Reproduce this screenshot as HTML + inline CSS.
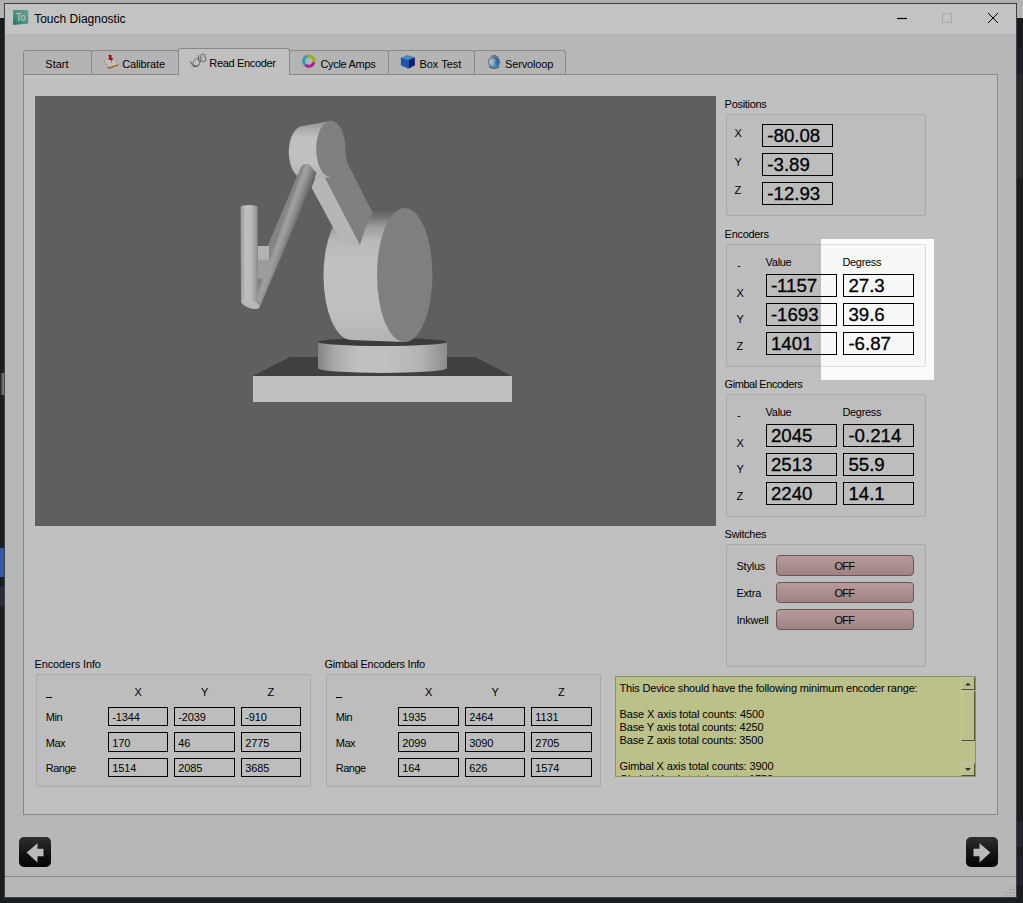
<!DOCTYPE html><html><head><meta charset="utf-8"><title>Touch Diagnostic</title><style>
html,body{margin:0;padding:0}
body{width:1023px;height:903px;overflow:hidden;position:relative;background:#23262c;font-family:"Liberation Sans",sans-serif;font-size:11px;color:#000}
div,span,svg{position:absolute;box-sizing:border-box}
.t{white-space:pre}
.win{left:5px;top:4px;width:1011px;height:893px;background:#f0f0f0}
.gb{border:1px solid #dedede;border-radius:2px;background:#f8f8f8}
.f{border:1px solid #000}
.tab{border:1px solid #b4b4b4;border-bottom:none;background:#ececec;border-radius:3px 3px 0 0}
.btn{border:1px solid #8f6e6e;border-radius:4px;background:linear-gradient(#f1caca,#d0abab)}
.nav{border-radius:5px;background:linear-gradient(#3c3f42,#1c1d1e 50%,#060606)}
</style></head><body>
<div style="left:0px;top:0px;width:1023px;height:18px;background:linear-gradient(#e4e4e4,#f0f0f0)"></div>
<div style="left:0px;top:18px;width:5px;height:885px;background:#21252b"></div>
<div style="left:1016px;top:18px;width:7px;height:885px;background:#22252b"></div>
<div style="left:1016px;top:18px;width:7px;height:30px;background:#1f2329"></div>
<div style="left:1016px;top:48px;width:7px;height:26px;background:#282b33"></div>
<div style="left:1016px;top:74px;width:7px;height:105px;background:#323339"></div>
<div style="left:1016px;top:821px;width:7px;height:26px;background:#2e323e"></div>
<div style="left:1016px;top:856px;width:7px;height:30px;background:#2c2f3a"></div>
<div style="left:0px;top:548px;width:4px;height:29px;background:#4a72dc"></div>
<div style="left:0px;top:587px;width:4px;height:19px;background:#373b43"></div>
<div style="left:0px;top:373px;width:4px;height:22px;background:linear-gradient(90deg,#23262c,#bdbdbd)"></div>
<div style="left:4px;top:3px;width:1013px;height:895px;background:#50545a"></div>
<div class="win">
</div>
<div style="left:5px;top:4px;width:1011px;height:30px;background:#fff"></div>
<svg style="left:12px;top:9px" width="18" height="17" viewBox="12 9 18 17"><defs><linearGradient id="gIc" x1="1" y1="0" x2="0.1" y2="1"><stop offset="0" stop-color="#88d0c4"/><stop offset="0.6" stop-color="#62b8a5"/><stop offset="1" stop-color="#349a84"/></linearGradient></defs><polygon points="13.1,10.1 28.2,10.1 28.2,23.5 13.1,24.9" fill="url(#gIc)"/><text x="16" y="21" font-family="Liberation Sans, sans-serif" font-size="10.5" fill="#f6fdfb" stroke="#f6fdfb" stroke-width="0.25" textLength="9.6" lengthAdjust="spacingAndGlyphs">To</text></svg>
<span class="t" style="left:34.20px;top:11.64px;font-size:12px;line-height:14px;">Touch Diagnostic</span>
<svg style="left:890px;top:8px" width="120" height="22" viewBox="890 8 120 22"><path d="M897 18.5H907" stroke="#000" stroke-width="1.2"/><rect x="942.5" y="13.5" width="9" height="9" fill="none" stroke="#dcdcdc" stroke-width="1"/><path d="M988 13L998 23M998 13L988 23" stroke="#000" stroke-width="1"/></svg>
<div style="left:23px;top:74px;width:975px;height:741px;background:#fbfbfb;border:1px solid #b4b4b4"></div>
<div class="tab" style="left:23px;top:50px;width:69px;height:24px;"></div>
<div class="tab" style="left:91px;top:50px;width:88px;height:24px;"></div>
<div class="tab" style="left:289px;top:50px;width:100px;height:24px;"></div>
<div class="tab" style="left:388px;top:50px;width:87px;height:24px;"></div>
<div class="tab" style="left:474px;top:50px;width:92px;height:24px;"></div>
<div class="tab" style="left:178px;top:48px;width:112px;height:27px;background:#fbfbfb"></div>
<span class="t" style="left:45.30px;top:57.99px;font-size:11px;line-height:13px;">Start</span>
<span class="t" style="left:122.20px;top:57.89px;font-size:11px;line-height:13px;letter-spacing:-0.15px;">Calibrate</span>
<span class="t" style="left:209.30px;top:56.99px;font-size:11px;line-height:13px;letter-spacing:-0.33px;">Read Encoder</span>
<span class="t" style="left:320.40px;top:57.89px;font-size:11px;line-height:13px;letter-spacing:-0.3px;">Cycle Amps</span>
<span class="t" style="left:419.40px;top:57.89px;font-size:11px;line-height:13px;">Box Test</span>
<span class="t" style="left:505.00px;top:57.89px;font-size:11px;line-height:13px;letter-spacing:-0.15px;">Servoloop</span>
<svg style="left:100px;top:52px" width="22" height="20" viewBox="100 52 22 20"><polygon points="104,61 112,59.2 117.8,65 108.7,68.3" fill="#ffffff" fill-opacity="0.8"/><path d="M104 61L108.7 68.3" stroke="#d9955a" stroke-width="1" stroke-dasharray="1.2 0.7" fill="none"/><path d="M108.5 68.3L117.8 65" stroke="#dc8430" stroke-width="1.5" fill="none" stroke-linecap="round"/><path d="M111.5 60V62.6" stroke="#8a8a8a" stroke-width="0.9"/><path d="M108.1 55.2Q109.8 54.3 111.6 55.2L111.4 57.3Q113.3 58 113 59.6Q110.8 60.8 108.6 59.6Q108.3 58 109.2 57.3Z" fill="#d41616"/></svg>
<svg style="left:186px;top:51px" width="24" height="20" viewBox="186 51 24 20"><ellipse cx="196.6" cy="62.4" rx="3.2" ry="4.3" transform="rotate(25 196.6 62.4)" fill="#fff" fill-opacity="0.25" stroke="#8a8a8a" stroke-width="0.75"/><ellipse cx="203" cy="57.9" rx="2.7" ry="3.9" transform="rotate(-10 203 57.9)" fill="#fff" fill-opacity="0.25" stroke="#808080" stroke-width="0.8"/><ellipse cx="203.8" cy="59.5" rx="2.3" ry="2.6" fill="none" stroke="#a8a8a8" stroke-width="0.6"/><path d="M190 61.2Q192 64.5 194.8 66.3" stroke="#5a5a5a" stroke-width="0.9" fill="none"/><path d="M190.3 65.4L194.3 66.7" stroke="#b0b0b0" stroke-width="0.7" fill="none"/><path d="M198.5 55V61Q199.5 62.5 201 61.5" stroke="#6a6a6a" stroke-width="0.8" fill="none"/><path d="M194.4 66.4Q197.5 66.8 199.6 64" stroke="#666" stroke-width="0.8" fill="none"/><circle cx="194.6" cy="66.2" r="0.7" fill="#444"/></svg>
<svg style="left:300px;top:52px" width="18" height="18" viewBox="300 52 18 18"><path d="M307.45 56.08A5.2 5.2 0 0 1 313.89 62.18" stroke="#cfe81a" stroke-width="3.0" fill="none"/><path d="M313.89 62.18A5.2 5.2 0 0 1 305.12 64.78" stroke="#e32bc8" stroke-width="3.0" fill="none"/><path d="M305.12 64.78A5.2 5.2 0 0 1 307.45 56.08" stroke="#2fd6fa" stroke-width="3.0" fill="none"/></svg>
<svg style="left:398px;top:52px" width="20" height="20" viewBox="398 52 20 20"><polygon points="400.9,57.5 407.4,55 414.9,57.2 408.4,60" fill="#55b4ff"/><polygon points="400.9,57.5 408.4,60 408.4,68.8 400.9,65.3" fill="#2a70e4"/><polygon points="408.4,60 414.9,57.2 414.9,65.3 408.4,68.8" fill="#0e2aa6"/></svg>
<svg style="left:485px;top:52px" width="20" height="20" viewBox="485 52 20 20"><defs><linearGradient id="gSv" x1="0" y1="0" x2="0" y2="1"><stop offset="0" stop-color="#2f78e8"/><stop offset="0.5" stop-color="#3a94e8"/><stop offset="1" stop-color="#35d2ff"/></linearGradient><radialGradient id="gSh" cx="0.25" cy="0.45" r="0.55"><stop offset="0" stop-color="#fff" stop-opacity="0.95"/><stop offset="0.45" stop-color="#fff" stop-opacity="0.7"/><stop offset="1" stop-color="#fff" stop-opacity="0"/></radialGradient></defs><path d="M489.2 66.6Q494 70 499 66.6" stroke="#666" stroke-width="1.3" fill="none"/><path d="M491 56.2Q495 53.9 498.8 57.2" stroke="#8a8a8a" stroke-width="1" fill="none"/><circle cx="494.1" cy="62.2" r="5.8" fill="url(#gSv)" stroke="#8e99a6" stroke-width="0.9"/><circle cx="494.1" cy="62.2" r="5.4" fill="url(#gSh)"/><path d="M494.2 62.4H498" stroke="#3a4a5a" stroke-width="0.7"/><path d="M494.2 58V62.4" stroke="#9ab0c8" stroke-width="0.5"/></svg>
<svg style="left:35px;top:96px" width="681" height="430" viewBox="35 96 681 430"><defs>
<linearGradient id="gDisc" gradientUnits="userSpaceOnUse" x1="0" y1="208" x2="0" y2="342"><stop offset="0" stop-color="#737373"/><stop offset="0.06" stop-color="#929292"/><stop offset="0.14" stop-color="#cccccc"/><stop offset="0.24" stop-color="#f1f1f1"/><stop offset="0.4" stop-color="#fbfbfb"/><stop offset="0.75" stop-color="#fbfbfb"/><stop offset="1" stop-color="#ebebeb"/></linearGradient>
<linearGradient id="gBase" gradientUnits="userSpaceOnUse" x1="318" y1="0" x2="447" y2="0"><stop offset="0" stop-color="#adadad"/><stop offset="0.12" stop-color="#dcdcdc"/><stop offset="0.3" stop-color="#fbfbfb"/><stop offset="0.55" stop-color="#fbfbfb"/><stop offset="0.8" stop-color="#ebebeb"/><stop offset="1" stop-color="#b7b7b7"/></linearGradient>
<linearGradient id="gElbow" gradientUnits="userSpaceOnUse" x1="0" y1="121" x2="0" y2="178"><stop offset="0" stop-color="#bcbcbc"/><stop offset="0.12" stop-color="#dcdcdc"/><stop offset="0.3" stop-color="#fbfbfb"/><stop offset="0.75" stop-color="#fbfbfb"/><stop offset="1" stop-color="#e6e6e6"/></linearGradient>
<linearGradient id="gFore" gradientUnits="userSpaceOnUse" x1="277.953338070623" y1="233.4320133074589" x2="292.046661929377" y2="238.5679866925411"><stop offset="0" stop-color="#adadad"/><stop offset="0.25" stop-color="#d4d4d4"/><stop offset="0.5" stop-color="#c1c1c1"/><stop offset="0.8" stop-color="#9d9d9d"/><stop offset="1" stop-color="#808080"/></linearGradient>
<linearGradient id="gSty" gradientUnits="userSpaceOnUse" x1="240.6" y1="0" x2="257.5" y2="0"><stop offset="0" stop-color="#c7c7c7"/><stop offset="0.3" stop-color="#fbfbfb"/><stop offset="0.65" stop-color="#f1f1f1"/><stop offset="1" stop-color="#bcbcbc"/></linearGradient>
</defs>
<rect x="35" y="96" width="681" height="430" fill="#7d7d7d"/>
<polygon points="253,376 512,376 475,357 290,357" fill="#545454"/>
<rect x="253" y="376" width="259" height="26" fill="#fbfbfb"/>
<path d="M318 342V368A64.5 5 0 0 0 447 368V342Z" fill="url(#gBase)"/>
<ellipse cx="382.5" cy="342" rx="64.5" ry="4" fill="#4e4e4e"/>
<ellipse cx="351" cy="275.5" rx="27.5" ry="64.5" fill="url(#gDisc)"/>
<polygon points="351,211 404.7,208 404.7,342 351,340" fill="url(#gDisc)"/>
<polygon points="317.5,173 324,175 360,245 342.5,245 311.5,187.5" fill="#eeeeee"/>
<polygon points="323,174 345.5,152 347,162 372.5,212.5 366,226 360,245" fill="#a7a7a7"/>
<ellipse cx="404.7" cy="275" rx="27.7" ry="67" fill="#a7a7a7"/>
<ellipse cx="303" cy="152" rx="14.2" ry="26" fill="url(#gElbow)"/>
<polygon points="303,126 330.6,121 330.6,177.5 303,178" fill="url(#gElbow)"/>
<ellipse cx="330.8" cy="149" rx="14.6" ry="28.2" fill="#a7a7a7"/>
<polygon points="301.2,166.5 303,164.5 309,164 316.5,173 260.5,305.5 245,300" fill="url(#gFore)"/>
<rect x="257.5" y="246" width="11.5" height="14" fill="#e9e9e9"/>
<rect x="257.5" y="259.7" width="13" height="19" fill="#cccccc"/>
<path d="M240.6 207A8.45 2 0 0 1 257.5 207V300L259.5 305.5L241 301Z" fill="url(#gSty)"/>
<ellipse cx="250.5" cy="304.2" rx="9.6" ry="4" transform="rotate(18 250.5 304.2)" fill="#f1f1f1"/>
</svg>
<span class="t" style="left:724.60px;top:97.99px;font-size:11px;line-height:13px;letter-spacing:-0.3px;">Positions</span>
<div class="gb" style="left:726px;top:114px;width:200px;height:102px;"></div>
<span class="t" style="left:734.60px;top:127.29px;font-size:11px;line-height:13px;">X</span>
<div class="f" style="left:762px;top:124px;width:71px;height:23px;"></div>
<span class="t" style="left:767.30px;top:125.03px;font-size:18.67px;line-height:22px;-webkit-text-stroke:0.3px #000;">-80.08</span>
<span class="t" style="left:734.60px;top:155.79px;font-size:11px;line-height:13px;">Y</span>
<div class="f" style="left:762px;top:153px;width:71px;height:23px;"></div>
<span class="t" style="left:767.30px;top:154.03px;font-size:18.67px;line-height:22px;-webkit-text-stroke:0.3px #000;">-3.89</span>
<span class="t" style="left:734.60px;top:184.29px;font-size:11px;line-height:13px;">Z</span>
<div class="f" style="left:762px;top:182px;width:71px;height:23px;"></div>
<span class="t" style="left:767.30px;top:183.03px;font-size:18.67px;line-height:22px;-webkit-text-stroke:0.3px #000;">-12.93</span>
<span class="t" style="left:724.60px;top:228.09px;font-size:11px;line-height:13px;letter-spacing:-0.3px;">Encoders</span>
<div class="gb" style="left:726px;top:244px;width:200px;height:123px;"></div>
<span class="t" style="left:737.00px;top:259.09px;font-size:11px;line-height:13px;">-</span>
<span class="t" style="left:765.60px;top:256.09px;font-size:11px;line-height:13px;letter-spacing:-0.3px;">Value</span>
<span class="t" style="left:842.40px;top:256.09px;font-size:11px;line-height:13px;letter-spacing:-0.3px;">Degress</span>
<span class="t" style="left:736.50px;top:286.59px;font-size:11px;line-height:13px;">X</span>
<div class="f" style="left:766px;top:274px;width:71px;height:23px;"></div>
<div class="f" style="left:843px;top:274px;width:71px;height:23px;"></div>
<span class="t" style="left:770.90px;top:274.93px;font-size:18.67px;line-height:22px;-webkit-text-stroke:0.3px #000;">-1157</span>
<span class="t" style="left:848.40px;top:274.93px;font-size:18.67px;line-height:22px;-webkit-text-stroke:0.3px #000;">27.3</span>
<span class="t" style="left:736.50px;top:313.19px;font-size:11px;line-height:13px;">Y</span>
<div class="f" style="left:766px;top:303px;width:71px;height:23px;"></div>
<div class="f" style="left:843px;top:303px;width:71px;height:23px;"></div>
<span class="t" style="left:770.90px;top:303.93px;font-size:18.67px;line-height:22px;-webkit-text-stroke:0.3px #000;">-1693</span>
<span class="t" style="left:848.40px;top:303.93px;font-size:18.67px;line-height:22px;-webkit-text-stroke:0.3px #000;">39.6</span>
<span class="t" style="left:736.50px;top:339.79px;font-size:11px;line-height:13px;">Z</span>
<div class="f" style="left:766px;top:332px;width:71px;height:23px;"></div>
<div class="f" style="left:843px;top:332px;width:71px;height:23px;"></div>
<span class="t" style="left:770.90px;top:332.93px;font-size:18.67px;line-height:22px;-webkit-text-stroke:0.3px #000;">1401</span>
<span class="t" style="left:848.40px;top:332.93px;font-size:18.67px;line-height:22px;-webkit-text-stroke:0.3px #000;">-6.87</span>
<span class="t" style="left:724.60px;top:378.09px;font-size:11px;line-height:13px;letter-spacing:-0.45px;">Gimbal Encoders</span>
<div class="gb" style="left:726px;top:394px;width:200px;height:123px;"></div>
<span class="t" style="left:737.00px;top:409.09px;font-size:11px;line-height:13px;">-</span>
<span class="t" style="left:765.60px;top:406.09px;font-size:11px;line-height:13px;letter-spacing:-0.3px;">Value</span>
<span class="t" style="left:842.40px;top:406.09px;font-size:11px;line-height:13px;letter-spacing:-0.3px;">Degress</span>
<span class="t" style="left:736.50px;top:436.59px;font-size:11px;line-height:13px;">X</span>
<div class="f" style="left:766px;top:424px;width:71px;height:23px;"></div>
<div class="f" style="left:843px;top:424px;width:71px;height:23px;"></div>
<span class="t" style="left:770.90px;top:424.93px;font-size:18.67px;line-height:22px;-webkit-text-stroke:0.3px #000;">2045</span>
<span class="t" style="left:848.40px;top:424.93px;font-size:18.67px;line-height:22px;-webkit-text-stroke:0.3px #000;">-0.214</span>
<span class="t" style="left:736.50px;top:463.19px;font-size:11px;line-height:13px;">Y</span>
<div class="f" style="left:766px;top:453px;width:71px;height:23px;"></div>
<div class="f" style="left:843px;top:453px;width:71px;height:23px;"></div>
<span class="t" style="left:770.90px;top:453.93px;font-size:18.67px;line-height:22px;-webkit-text-stroke:0.3px #000;">2513</span>
<span class="t" style="left:848.40px;top:453.93px;font-size:18.67px;line-height:22px;-webkit-text-stroke:0.3px #000;">55.9</span>
<span class="t" style="left:736.50px;top:489.79px;font-size:11px;line-height:13px;">Z</span>
<div class="f" style="left:766px;top:482px;width:71px;height:23px;"></div>
<div class="f" style="left:843px;top:482px;width:71px;height:23px;"></div>
<span class="t" style="left:770.90px;top:482.93px;font-size:18.67px;line-height:22px;-webkit-text-stroke:0.3px #000;">2240</span>
<span class="t" style="left:848.40px;top:482.93px;font-size:18.67px;line-height:22px;-webkit-text-stroke:0.3px #000;">14.1</span>
<span class="t" style="left:724.60px;top:528.09px;font-size:11px;line-height:13px;letter-spacing:-0.3px;">Switches</span>
<div class="gb" style="left:726px;top:544px;width:200px;height:123px;"></div>
<span class="t" style="left:736.40px;top:560.29px;font-size:11px;line-height:13px;letter-spacing:-0.2px;">Stylus</span>
<div class="btn" style="left:776px;top:555px;width:138px;height:21px;"></div>
<span class="t" style="left:834.60px;top:560.29px;font-size:11px;line-height:13px;letter-spacing:-0.8px;">OFF</span>
<span class="t" style="left:736.40px;top:587.29px;font-size:11px;line-height:13px;letter-spacing:-0.2px;">Extra</span>
<div class="btn" style="left:776px;top:582px;width:138px;height:21px;"></div>
<span class="t" style="left:834.60px;top:587.29px;font-size:11px;line-height:13px;letter-spacing:-0.8px;">OFF</span>
<span class="t" style="left:736.40px;top:614.29px;font-size:11px;line-height:13px;letter-spacing:-0.2px;">Inkwell</span>
<div class="btn" style="left:776px;top:609px;width:138px;height:21px;"></div>
<span class="t" style="left:834.60px;top:614.29px;font-size:11px;line-height:13px;letter-spacing:-0.8px;">OFF</span>
<span class="t" style="left:34.50px;top:658.09px;font-size:11px;line-height:13px;letter-spacing:-0.12px;">Encoders Info</span>
<div class="gb" style="left:36px;top:674px;width:275px;height:113px;"></div>
<div style="left:46px;top:696.5px;width:6px;height:1px;background:#000"></div>
<span class="t" style="left:134.40px;top:686.19px;font-size:11px;line-height:13px;">X</span>
<span class="t" style="left:200.90px;top:686.19px;font-size:11px;line-height:13px;">Y</span>
<span class="t" style="left:267.40px;top:686.19px;font-size:11px;line-height:13px;">Z</span>
<span class="t" style="left:45.80px;top:711.19px;font-size:11px;line-height:13px;letter-spacing:-0.5px;">Min</span>
<div class="f" style="left:108px;top:707px;width:60px;height:19px;"></div>
<span class="t" style="left:112.30px;top:711.19px;font-size:11px;line-height:13px;letter-spacing:-0.15px;">-1344</span>
<div class="f" style="left:174px;top:707px;width:61px;height:19px;"></div>
<span class="t" style="left:178.30px;top:711.19px;font-size:11px;line-height:13px;letter-spacing:-0.15px;">-2039</span>
<div class="f" style="left:241px;top:707px;width:60px;height:19px;"></div>
<span class="t" style="left:245.30px;top:711.19px;font-size:11px;line-height:13px;letter-spacing:-0.15px;">-910</span>
<span class="t" style="left:45.80px;top:736.89px;font-size:11px;line-height:13px;letter-spacing:-0.5px;">Max</span>
<div class="f" style="left:108px;top:732px;width:60px;height:20px;"></div>
<span class="t" style="left:112.30px;top:736.89px;font-size:11px;line-height:13px;letter-spacing:-0.15px;">170</span>
<div class="f" style="left:174px;top:732px;width:61px;height:20px;"></div>
<span class="t" style="left:178.30px;top:736.89px;font-size:11px;line-height:13px;letter-spacing:-0.15px;">46</span>
<div class="f" style="left:241px;top:732px;width:60px;height:20px;"></div>
<span class="t" style="left:245.30px;top:736.89px;font-size:11px;line-height:13px;letter-spacing:-0.15px;">2775</span>
<span class="t" style="left:45.80px;top:761.69px;font-size:11px;line-height:13px;letter-spacing:-0.5px;">Range</span>
<div class="f" style="left:108px;top:758px;width:60px;height:19px;"></div>
<span class="t" style="left:112.30px;top:761.69px;font-size:11px;line-height:13px;letter-spacing:-0.15px;">1514</span>
<div class="f" style="left:174px;top:758px;width:61px;height:19px;"></div>
<span class="t" style="left:178.30px;top:761.69px;font-size:11px;line-height:13px;letter-spacing:-0.15px;">2085</span>
<div class="f" style="left:241px;top:758px;width:60px;height:19px;"></div>
<span class="t" style="left:245.30px;top:761.69px;font-size:11px;line-height:13px;letter-spacing:-0.15px;">3685</span>
<span class="t" style="left:324.50px;top:658.09px;font-size:11px;line-height:13px;letter-spacing:-0.27px;">Gimbal Encoders Info</span>
<div class="gb" style="left:326px;top:674px;width:275px;height:113px;"></div>
<div style="left:336px;top:696.5px;width:6px;height:1px;background:#000"></div>
<span class="t" style="left:424.90px;top:686.19px;font-size:11px;line-height:13px;">X</span>
<span class="t" style="left:491.40px;top:686.19px;font-size:11px;line-height:13px;">Y</span>
<span class="t" style="left:557.90px;top:686.19px;font-size:11px;line-height:13px;">Z</span>
<span class="t" style="left:335.80px;top:711.19px;font-size:11px;line-height:13px;letter-spacing:-0.5px;">Min</span>
<div class="f" style="left:398px;top:707px;width:61px;height:19px;"></div>
<span class="t" style="left:402.30px;top:711.19px;font-size:11px;line-height:13px;letter-spacing:-0.15px;">1935</span>
<div class="f" style="left:465px;top:707px;width:60px;height:19px;"></div>
<span class="t" style="left:469.30px;top:711.19px;font-size:11px;line-height:13px;letter-spacing:-0.15px;">2464</span>
<div class="f" style="left:531px;top:707px;width:61px;height:19px;"></div>
<span class="t" style="left:535.30px;top:711.19px;font-size:11px;line-height:13px;letter-spacing:-0.15px;">1131</span>
<span class="t" style="left:335.80px;top:736.89px;font-size:11px;line-height:13px;letter-spacing:-0.5px;">Max</span>
<div class="f" style="left:398px;top:732px;width:61px;height:20px;"></div>
<span class="t" style="left:402.30px;top:736.89px;font-size:11px;line-height:13px;letter-spacing:-0.15px;">2099</span>
<div class="f" style="left:465px;top:732px;width:60px;height:20px;"></div>
<span class="t" style="left:469.30px;top:736.89px;font-size:11px;line-height:13px;letter-spacing:-0.15px;">3090</span>
<div class="f" style="left:531px;top:732px;width:61px;height:20px;"></div>
<span class="t" style="left:535.30px;top:736.89px;font-size:11px;line-height:13px;letter-spacing:-0.15px;">2705</span>
<span class="t" style="left:335.80px;top:761.69px;font-size:11px;line-height:13px;letter-spacing:-0.5px;">Range</span>
<div class="f" style="left:398px;top:758px;width:61px;height:19px;"></div>
<span class="t" style="left:402.30px;top:761.69px;font-size:11px;line-height:13px;letter-spacing:-0.15px;">164</span>
<div class="f" style="left:465px;top:758px;width:60px;height:19px;"></div>
<span class="t" style="left:469.30px;top:761.69px;font-size:11px;line-height:13px;letter-spacing:-0.15px;">626</span>
<div class="f" style="left:531px;top:758px;width:61px;height:19px;"></div>
<span class="t" style="left:535.30px;top:761.69px;font-size:11px;line-height:13px;letter-spacing:-0.15px;">1574</span>
<div style="left:615px;top:676px;width:361px;height:101px;background:#f6fbb3;border:1px solid #b9bc84;overflow:hidden"><span class="t" style="left:3.50px;top:5.29px;font-size:11px;line-height:13px;letter-spacing:-0.18px;">This Device should have the following minimum encoder range:</span><span class="t" style="left:3.50px;top:31.29px;font-size:11px;line-height:13px;letter-spacing:-0.12px;">Base X axis total counts: 4500</span><span class="t" style="left:3.50px;top:44.29px;font-size:11px;line-height:13px;letter-spacing:-0.12px;">Base Y axis total counts: 4250</span><span class="t" style="left:3.50px;top:57.29px;font-size:11px;line-height:13px;letter-spacing:-0.12px;">Base Z axis total counts: 3500</span><span class="t" style="left:3.50px;top:83.29px;font-size:11px;line-height:13px;letter-spacing:-0.12px;">Gimbal X axis total counts: 3900</span><span class="t" style="left:3.50px;top:96.29px;font-size:11px;line-height:13px;letter-spacing:-0.12px;">Gimbal Y axis total counts: 1750</span><div style="left:345px;top:0;width:14px;height:99px;background:#f6fbb3"><div style="left:0;top:0;width:14px;height:13px;border:1px solid;border-color:#fff #6b6d4c #6b6d4c #fff;background:#f6fbb3"></div><div style="left:0;top:14px;width:14px;height:50px;border:1px solid;border-color:#fff #6b6d4c #6b6d4c #fff;background:#f6fbb3"></div><div style="left:0;top:86px;width:14px;height:13px;border:1px solid;border-color:#fff #6b6d4c #6b6d4c #fff;background:#f6fbb3"></div><svg style="left:0;top:0" width="14" height="99"><path d="M4 8.5L7 5.5L10 8.5Z" fill="#444"/><path d="M4 91L7 94L10 91Z" fill="#444"/></svg></div></div>
<div class="nav" style="left:19px;top:837px;width:32px;height:30px;"><svg style="left:0;top:0" width="32" height="30"><path d="M7.6 15.5L18.5 6.2V11.7H24.5V19.3H18.5V25.5Z" fill="#f4f4f4"/></svg></div>
<div class="nav" style="left:966px;top:837px;width:32px;height:30px;"><svg style="left:0;top:0" width="32" height="30"><path d="M24.4 15.5L13.5 6.2V11.7H7.5V19.3H13.5V25.5Z" fill="#f4f4f4"/></svg></div>
<div style="left:5px;top:876px;width:1011px;height:1px;background:#b4b4b4"></div>
<svg style="left:1000px;top:884px" width="16" height="13" viewBox="1000 884 16 13"><g fill="#c6c6c6"><rect x="1013" y="886" width="1.4" height="1.4"/><rect x="1013" y="889" width="1.4" height="1.4"/><rect x="1010" y="889" width="1.4" height="1.4"/><rect x="1013" y="892" width="1.4" height="1.4"/><rect x="1010" y="892" width="1.4" height="1.4"/><rect x="1007" y="892" width="1.4" height="1.4"/><rect x="1013" y="895" width="1.4" height="1.4"/><rect x="1010" y="895" width="1.4" height="1.4"/><rect x="1007" y="895" width="1.4" height="1.4"/><rect x="1004" y="895" width="1.4" height="1.4"/></g></svg>
<div style="left:821px;top:239px;width:113px;height:141px;box-shadow:0 0 0 2000px rgba(0,0,0,0.235);pointer-events:none"></div>
</body></html>
